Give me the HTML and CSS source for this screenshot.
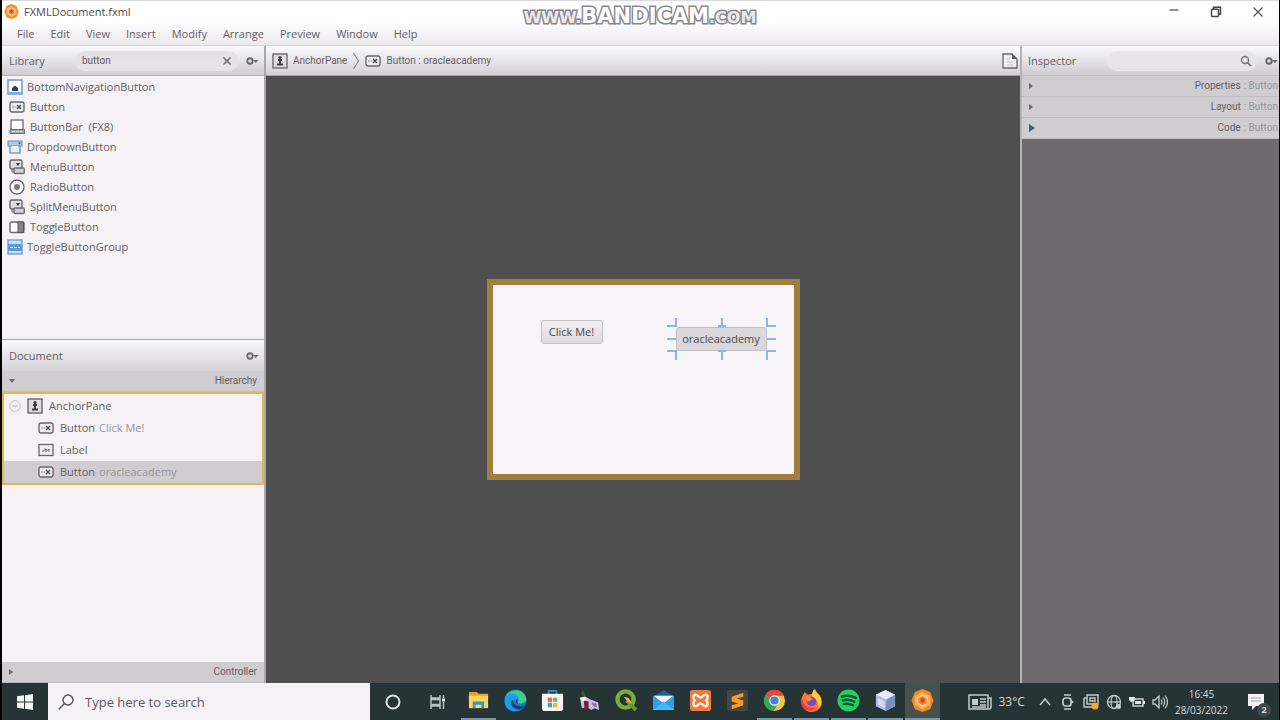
FILE: index.html
```html
<!DOCTYPE html>
<html lang="en">
<head>
<meta charset="utf-8">
<title>FXMLDocument.fxml</title>
<link rel="stylesheet" href="styles.css">
</head>
<body>
<svg class="defs" aria-hidden="true">
  <symbol id="i-button" viewBox="0 0 16 16"><rect x="1" y="3" width="14" height="10" rx="2" fill="#eee" stroke="#6b686c" stroke-width="1.4"/><path d="M4 6.500v3M5.500 8h2" stroke="#99969a" stroke-width="1"/><path d="M8 6l4 4M12 6l-4 4" stroke="#4c4a4e" stroke-width="1.400"/></symbol>
  <symbol id="i-anchor" viewBox="0 0 16 16"><rect x="1" y="1" width="14" height="14" fill="#dedcdf" stroke="#6b686c" stroke-width="1.4"/><path d="M8 4v8M6 7h4M5 11.500h6" stroke="#3d3b3f" stroke-width="1.800" fill="none"/><circle cx="8" cy="4.500" r="1.600" fill="#3d3b3f"/></symbol>
  <symbol id="i-label" viewBox="0 0 16 16"><rect x="1" y="2.500" width="14" height="11" fill="#eee" stroke="#6b686c" stroke-width="1.300"/><path d="M4 9h2V7.500M7 6v3h2V7.500H7M12 7.500h-2V9h2" stroke="#77747a" stroke-width=".9" fill="none"/></symbol>
  <symbol id="i-menu" viewBox="0 0 16 16"><rect x="1" y="1" width="12" height="9" rx="1.500" fill="#dedcdf" stroke="#6b686c" stroke-width="1.400"/><path d="M7 4h4L9 7z" fill="#333"/><rect x="5" y="9" width="10.300" height="5.500" rx="1" fill="#d0ced1" stroke="#6b686c" stroke-width="1.300"/><path d="M3 10v3h2" stroke="#6b686c" fill="none"/></symbol>
  <symbol id="i-gear" viewBox="0 0 14 10"><circle cx="5" cy="5" r="2.700" fill="none" stroke="#6b686c" stroke-width="1.900"/><path d="M8 4h5.500L10.800 7z" fill="#6b686c"/></symbol>
  <symbol id="i-scene" viewBox="0 0 24 24"><path d="M12 0l4 1.500 4 1.500 1.500 4L23.500 12l-2 5-1.500 4-4 1.500L12 24l-4-1.500L4 21l-1.500-4L.5 12l2-5L4 3l4-1.500z" fill="#f28a22"/><path d="M12 3l8 4.500v9L12 21l-8-4.500v-9z" fill="#ffb057"/><path d="M12 6.500l5 2.800v5.500l-5 2.900-5-2.900V9.300z" fill="#fb7d2c" stroke="#ffe1a6" stroke-width="1.200"/><circle cx="12" cy="12" r="2.300" fill="#e5401c"/></symbol>
</svg>

<header class="titlebar">
  <svg class="app-icon"><use href="#i-scene"/></svg>
  <h1>FXMLDocument.fxml</h1>
  <div class="window-controls">
    <button aria-label="Minimize"><svg viewBox="0 0 12 12"><path d="M1.500 4h9" stroke="#555" stroke-width="1.300"/></svg></button>
    <button aria-label="Restore"><svg viewBox="0 0 12 12"><path d="M3.500 3V1.200h7v7H9" fill="none" stroke="#444" stroke-width="1.500"/><rect x="1.500" y="3.300" width="7" height="7.200" rx="1" fill="#fff" stroke="#444" stroke-width="1.500"/></svg></button>
    <button aria-label="Close"><svg viewBox="0 0 12 12"><path d="M1.500 1.500l9 9M10.500 1.500l-9 9" stroke="#555" stroke-width="1.300"/></svg></button>
  </div>
</header>
<div class="watermark"><small>WWW.</small>BANDICAM<small>.COM</small></div>

<nav class="menubar">
  <button>File</button><button>Edit</button><button>View</button><button>Insert</button><button>Modify</button><button>Arrange</button><button>Preview</button><button>Window</button><button>Help</button>
</nav>

<main class="workspace">
  <aside class="left">
    <section class="library">
      <div class="panel-head">
        <label for="lib-search">Library</label>
        <div class="search">
          <input id="lib-search" type="text" value="button">
          <button aria-label="Clear search"><svg class="x-icon" viewBox="0 0 10 10"><path d="M1.500 1.500l7 7M8.500 1.500l-7 7" stroke="#6b686c" stroke-width="1.500"/></svg></button>
        </div>
        <button class="gear" aria-label="Library options"><svg><use href="#i-gear"/></svg></button>
      </div>
      <ul class="lib-list">
        <li class="wide"><svg viewBox="0 0 16 16"><rect x="1" y="1" width="14" height="14" fill="#fff" stroke="#6a9bc9" stroke-width="1.500"/><path d="M1 13h14v2H1z" fill="#7fb0dc"/><path d="M5 12V9l3-2.500L11 9v3z" fill="#174a73"/></svg>BottomNavigationButton</li>
        <li><svg><use href="#i-button"/></svg>Button</li>
        <li><svg viewBox="0 0 16 16"><rect x="2" y="1" width="12" height="11" fill="#fff" stroke="#6b686c" stroke-width="1.300"/><path d="M1 10.500h14.500v4H1z" fill="#aaa8ab" stroke="#6b686c"/><path d="M3 12.500h10" stroke="#ddd" stroke-dasharray="3 1"/></svg>ButtonBar&nbsp; (FX8)</li>
        <li class="wide"><svg viewBox="0 0 16 16"><rect x="3" y="6" width="10" height="8" fill="#e1effa" stroke="#689dcd" stroke-width="1.400"/><rect x="1" y="2" width="14" height="5" fill="#a9cdea" stroke="#5f91bf"/><path d="M5 7v2h6V7" fill="#fff"/><path d="M11 3.500h3l-1.500 2z" fill="#26537c"/></svg>DropdownButton</li>
        <li><svg><use href="#i-menu"/></svg>MenuButton</li>
        <li><svg viewBox="0 0 16 16"><circle cx="8" cy="8" r="7" fill="#f8f6f9" stroke="#6b686c" stroke-width="1.400"/><circle cx="8" cy="8" r="3" fill="#7b787c"/></svg>RadioButton</li>
        <li><svg><use href="#i-menu"/></svg>SplitMenuButton</li>
        <li><svg viewBox="0 0 16 16"><rect x="1" y="3" width="14" height="10.500" rx="1.500" fill="#fff" stroke="#6b686c" stroke-width="1.400"/><path d="M9 3h5.500v10.500H9z" fill="#89868a" stroke="#555" stroke-width="1"/></svg>ToggleButton</li>
        <li class="wide"><svg viewBox="0 0 16 16"><rect x="1" y="1" width="14" height="14" fill="#c6def2" stroke="#6a9bc9" stroke-width="1.300"/><rect x="1" y="5" width="14" height="7" fill="#5c9bd5"/><path d="M3 8.500h3m1 0h3m1 0h2" stroke="#d8eafa" stroke-width="1.200"/></svg>ToggleButtonGroup</li>
      </ul>
    </section>
    <section class="document">
      <div class="panel-head doc-head">
        <h2>Document</h2>
        <button class="gear" aria-label="Document options"><svg><use href="#i-gear"/></svg></button>
      </div>
      <button class="section-bar"><span class="arrow down"></span>Hierarchy</button>
      <ul class="tree">
        <li class="root"><svg class="fold" viewBox="0 0 12 12"><circle cx="6" cy="6" r="5.300" fill="#f4f2f5" stroke="#c4c2c5"/><path d="M3.500 6h5" stroke="#aaa8ab"/></svg><svg class="node"><use href="#i-anchor"/></svg>AnchorPane</li>
        <li><svg class="node"><use href="#i-button"/></svg>Button<span>Click Me!</span></li>
        <li><svg class="node"><use href="#i-label"/></svg>Label</li>
        <li class="selected"><svg class="node"><use href="#i-button"/></svg>Button<span>oracleacademy</span></li>
      </ul>
    </section>
    <button class="section-bar"><span class="arrow"></span>Controller</button>
  </aside>

  <section class="center">
    <div class="crumbs">
      <svg class="node"><use href="#i-anchor"/></svg><span>AnchorPane</span>
      <svg class="sep" viewBox="0 0 8 18"><path d="M1.500 1l5 8-5 8" fill="none" stroke="#8b888c" stroke-width="1.200"/></svg>
      <svg class="node"><use href="#i-button"/></svg><span>Button : oracleacademy</span>
      <svg class="page" viewBox="0 0 16 16"><path d="M1 1h9l5 5v9H1z" fill="#eeedef" stroke="#6b686c" stroke-width="1.300"/><path d="M10 1v5h5z" fill="#5c595d"/><path d="M5 6h3M5 9h6M5 12h6" stroke="#c7c5c8"/></svg>
    </div>
    <div class="canvas">
      <div class="scene">
        <button class="fx click">Click Me!</button>
        <button class="fx oracle">oracleacademy</button>
        <svg class="handles" viewBox="0 0 110 42"><path d="M0 8h9V0M51 8h8M55 0v8M109 8h-9V0M0 21h9M100 21h9M0 33h9v9M55 33v9M51 33h8M109 33h-9v9" fill="none" stroke="#8fb3ec" stroke-width="2"/></svg>
      </div>
    </div>
  </section>

  <aside class="right">
    <div class="panel-head">
      <label for="insp-search">Inspector</label>
      <div class="search">
        <input id="insp-search" type="text">
        <svg class="lens" viewBox="0 0 12 12"><circle cx="5" cy="5" r="3.500" fill="none" stroke="#777479" stroke-width="1.500"/><path d="M7.500 7.500l3.500 3.500" stroke="#777479" stroke-width="1.700"/></svg>
      </div>
      <button class="gear" aria-label="Inspector options"><svg><use href="#i-gear"/></svg></button>
    </div>
    <button class="section-bar"><span class="arrow"></span>Properties<i>: Button</i></button>
    <button class="section-bar"><span class="arrow"></span>Layout<i>: Button</i></button>
    <button class="section-bar"><span class="arrow focus"></span>Code<i>: Button</i></button>
  </aside>
</main>

<footer class="taskbar">
  <button class="start" aria-label="Start"><svg viewBox="0 0 16 16"><path d="M0 2.300l7-1v6.300H0zM8 1.200L16 0v7.600H8zM0 8.500h7v6.300l-7-1zM8 8.500h8V16l-8-1.200z" fill="#f3f6f6"/></svg></button>
  <label class="tb-search">
    <svg viewBox="0 0 16 16"><circle cx="10" cy="6" r="5" fill="none" stroke="#555" stroke-width="1.400"/><path d="M6.300 9.700L.8 15.200" stroke="#555" stroke-width="1.500"/></svg>
    <input type="text" placeholder="Type here to search" aria-label="Type here to search">
  </label>
  <div class="system">
    <button aria-label="Cortana"><svg viewBox="0 0 16 16"><circle cx="8" cy="8" r="6.500" fill="none" stroke="#dfe5e5" stroke-width="2"/></svg></button>
    <button aria-label="Task view"><svg viewBox="0 0 16 16"><path d="M1 1v3h9V1M1 15v-3h9v3M1 5.500h9v5H1zM13.500 1v3M13.500 8v7" fill="none" stroke="#b9c3c3" stroke-width="1.500"/><path d="M12 4.500h3v3h-3z" fill="#dfe5e5"/></svg></button>
  </div>
  <div class="apps">
    <button class="running" aria-label="File Explorer"><svg viewBox="0 0 24 24"><path d="M2 3h8l2 2h10v5H2z" fill="#e3a62d"/><path d="M2 7h20v13H2z" fill="#ffd45c"/><path d="M6 20v-7h12v7h-3v-3.500H9V20z" fill="#3994cf"/></svg></button>
    <button aria-label="Edge"><svg viewBox="0 0 24 24"><circle cx="12" cy="12" r="11.500" fill="#1477ca"/><path d="M1 10C3-1 20-2 23 9c1 5-3 8-7 7-2 0-3-1-1-3 1-3-2-6-6-6-4 0-7 1-8 3z" fill="#44ca8d"/><path d="M1 10C3 4 11 3 15 8c2 3-1 4-1 6-1-4-6-3-7 0-1 5 4 8 9 8C7 26-1 19 1 10z" fill="#1d9fe5"/><path d="M9 11c-4 5 1 11 8 10 3-1 4-2 5-4-5 2-13 1-13-6z" fill="#103f86"/><path d="M14 10c1 1-1 3 0 4 1 2 6 2 8-1-1 2-3 3-5 3-4 0-6-3-3-6z" fill="#24313a"/></svg></button>
    <button aria-label="Microsoft Store"><svg viewBox="0 0 24 24"><path d="M8 6V2h8v4" fill="none" stroke="#2d8cc7" stroke-width="2"/><path d="M1 5h22v15q0 3-3 3H4q-3 0-3-3z" fill="#f5f5f6"/><path d="M7 9h4.500v4.500H7z" fill="#ee6644"/><path d="M12.500 9H17v4.500h-4.500z" fill="#80b94b"/><path d="M7 14.500h4.500V19H7z" fill="#35a1dd"/><path d="M12.500 14.500H17V19h-4.500z" fill="#f1b92e"/></svg></button>
    <button aria-label="Image tool"><svg viewBox="0 0 24 24"><path d="M5 1l3 5-1 4-4-5z" fill="#28622f"/><path d="M2 9l6-1 5 3 8 3 1 8-5-2-3 2-5-3-5 1z" fill="#c9c1dc"/><path d="M6 12l5 1v8H7z" fill="#741d37"/><path d="M2 9l5-1 2 3-4 2z" fill="#f5f3f5"/><path d="M14 14l5 1 1 4-4-1z" fill="#8475af"/></svg></button>
    <button aria-label="QGIS"><svg viewBox="0 0 24 24"><circle cx="11" cy="11" r="8.500" fill="none" stroke="#79af37" stroke-width="4.500"/><path d="M12 12l10 10" stroke="#65982d" stroke-width="4"/><path d="M9 8l5 1 4 6-4-1z" fill="#edb248"/></svg></button>
    <button aria-label="Mail"><svg viewBox="0 0 24 24"><path d="M1 8l11-7 11 7v4H1z" fill="#155fa9"/><path d="M1 7h22v15H1z" fill="#2e9fe5"/><path d="M2 7h20l-10 8z" fill="#f4f5fc"/><path d="M1 22l11-9 11 9z" fill="#47b8f2"/></svg></button>
    <button aria-label="XAMPP"><svg viewBox="0 0 24 24"><rect x="1" y="1" width="22" height="22" rx="3" fill="#ed7844"/><path d="M7 6c-3 0-3 4-1 6-2 2-2 6 1 6 2 0 3-3 5-3s3 3 5 3c3 0 3-4 1-6 2-2 2-6-1-6-2 0-3 3-5 3S9 6 7 6z" fill="none" stroke="#fff0e7" stroke-width="2.500"/></svg></button>
    <button aria-label="Sublime Text"><svg viewBox="0 0 24 24"><rect x="1" y="1" width="22" height="22" rx="2" fill="#444545"/><path d="M6 8l12-4v4l-7 2 7 2v5L6 21v-4l7-2-7-2z" fill="#ff9a1f"/></svg></button>
    <button class="running" aria-label="Chrome"><svg viewBox="0 0 24 24"><circle cx="12" cy="12" r="11" fill="#f4c63e"/><path d="M12 12L2.500 6.500A11 11 0 0 1 22 7H12z" fill="#df4b3b"/><path d="M2.500 6.500A11 11 0 0 0 11 23l5-8-4-3z" fill="#37a45d"/><circle cx="12" cy="12" r="5.500" fill="#f7f4ed"/><circle cx="12" cy="12" r="4.300" fill="#4384df"/></svg></button>
    <button class="running" aria-label="Firefox"><svg viewBox="0 0 24 24"><path d="M5 3l3 3 5-1c0-2 1-4 3-5 1 4 5 5 6 10 3 8-3 14-10 14S-1 17 2 9c0-2 2-3 3-6z" fill="#ff7139"/><path d="M15 0c1 4 5 5 7 10 1 4 0 8-3 10 1-5-1-9-6-11-1-3 0-7 2-9z" fill="#ffd137"/><path d="M2 10c2 9 8 11 14 9-2 4-9 5-13 0-2-3-2-6-1-9z" fill="#ef344f"/><circle cx="12" cy="13" r="5" fill="#754bc5"/><path d="M5 8l5 0 3 3-5 2z" fill="#ff9b38"/></svg></button>
    <button class="running" aria-label="Spotify"><svg viewBox="0 0 24 24"><circle cx="12" cy="12" r="11.500" fill="#23cf62"/><path d="M5 8c5-1.500 10-1 14.500 1.300M6 12c4-1.300 8-.8 12 1.300M7 15.800c3-1 6.500-.5 9.500 1.200" fill="none" stroke="#12552d" stroke-width="2.500" stroke-linecap="round"/></svg></button>
    <button class="running" aria-label="NetBeans"><svg viewBox="0 0 24 24"><path d="M12 1l10 5v12l-10 5-10-5V6z" fill="#adbbdf"/><path d="M12 1l10 5-9 5L2 6z" fill="#e6ebfa"/><path d="M13 11l9-5v12l-10 5z" fill="#7d8fbe"/><path d="M4 9l7 4v7l-7-4z" fill="#d2daf0"/></svg></button>
    <button class="running active" aria-label="Scene Builder"><svg><use href="#i-scene"/></svg></button>
  </div>
  <div class="tray">
    <svg class="news" viewBox="0 0 24 16"><rect x="1" y="1" width="19" height="14" fill="none" stroke="#c3cccc" stroke-width="1.500"/><path d="M20 4h3v9q0 2-2 2" fill="none" stroke="#c3cccc" stroke-width="1.500"/><rect x="4" y="5" width="6" height="6" fill="#c3cccc"/><path d="M12 5h6M12 8h6M12 11h6M4 13h14" stroke="#c3cccc" stroke-width="1.300"/></svg>
    <span class="temp">33°C</span>
    <svg viewBox="0 0 16 16"><path d="M3 11l5-6 5 6" fill="none" stroke="#c3cccc" stroke-width="1.500"/></svg>
    <svg viewBox="0 0 16 16"><path d="M4 1h7M4 15h7" stroke="#c3cccc" stroke-width="1.500"/><rect x="3" y="4" width="8" height="8" rx="2.500" fill="none" stroke="#c3cccc" stroke-width="1.700"/><path d="M11 6l3 2-3 2z" fill="#c3cccc"/></svg>
    <svg viewBox="0 0 16 16"><path d="M1 4h3M1 4v9h9M4 1h11v9H4zM7 4h5v3H7z" fill="none" stroke="#c3cccc" stroke-width="1.400"/><circle cx="12" cy="12" r="3.600" fill="#f3a72b"/></svg>
    <svg viewBox="0 0 16 16"><circle cx="8" cy="8" r="6.500" fill="none" stroke="#c3cccc" stroke-width="1.300"/><ellipse cx="8" cy="8" rx="3" ry="6.500" fill="none" stroke="#c3cccc" stroke-width="1.200"/><path d="M1.500 8h13" stroke="#c3cccc" stroke-width="1.300"/><circle cx="12.500" cy="12.500" r="2.500" fill="#c3cccc"/></svg>
    <svg viewBox="0 0 16 16"><rect x="4" y="5" width="10" height="7" fill="none" stroke="#dfe5e5" stroke-width="1.300"/><path d="M6 7h6v3H6zM14 7h2v3h-2zM0 3h6v3q-3 4-6 0z" fill="#dfe5e5"/></svg>
    <svg viewBox="0 0 16 16"><path d="M1 6h2l4-4v12L3 10H1z" fill="none" stroke="#c3cccc" stroke-width="1.300"/><path d="M9 5.500q2 2.500 0 5M11 3.500q3.500 4.500 0 9M13 1.500q5 6.500 0 13" fill="none" stroke="#c3cccc" stroke-width="1.200"/></svg>
    <time><span>16:45</span><span>28/03/2022</span></time>
    <button class="notify" aria-label="Notifications, 2 new"><svg viewBox="0 0 18 18"><path d="M1 1h16v12H9l-4 4v-4H1z" fill="#f3f5f5"/><path d="M4 5h10M4 8h10" stroke="#9ba4a4"/></svg><b>2</b></button>
  </div>
</footer>
</body>
</html>
```

FILE: styles.css
```css
* { box-sizing: border-box; }
body {
  margin: 0;
  min-height: 100vh;
  display: flex;
  flex-direction: column;
  padding: 0 1px 0 2px;
  background: #000;
  color: #626064;
  font-family: "Open Sans", "Noto Sans", sans-serif;
  font-size: 11px;
  line-height: 16px;
  position: relative;
  overflow-x: hidden;
}
button, input {
  font: inherit;
  color: inherit;
  background: none;
  border: 0;
  padding: 0;
  margin: 0;
  outline: 0;
}
h1, h2, ul { margin: 0; padding: 0; font: inherit; list-style: none; }
svg { display: block; flex: none; }
.defs { position: absolute; width: 0; height: 0; }

.titlebar {
  display: flex;
  align-items: center;
  gap: 5px;
  height: 22px;
  padding-left: 2px;
  background: #fff;
  border-top: 1px solid #dcdadd;
  color: #4c4a4e;
}
.app-icon { width: 15px; height: 15px; }
.window-controls { display: flex; margin-left: auto; }
.window-controls button { width: 42px; height: 20px; display: grid; place-items: center; }
.window-controls svg { width: 12px; height: 12px; }
.watermark {
  position: absolute;
  top: 4px;
  left: 0;
  right: 0;
  text-align: center;
  font: bold 21px/24px "DejaVu Sans", sans-serif;
  color: #fff;
  -webkit-text-stroke: 3px #89878b;
  paint-order: stroke fill;
  pointer-events: none;
}
.watermark small { font-size: 16px; color: #eceaed; }

.menubar {
  display: flex;
  gap: 16px;
  height: 24px;
  padding: 0 15px;
  background: linear-gradient(#fefdff, #ebe9ec);
  border-bottom: 1px solid #d6d4d7;
}

.workspace {
  flex: 1;
  display: grid;
  grid-template-columns: 264px minmax(0, 1fr) 259px;
}
.left, .library, .document, .center, .right { display: flex; flex-direction: column; }
.left { background: #f4f2f5; border-right: 2px solid #aaa8ab; }
.library { height: 294px; border-bottom: 1px solid #a9a7aa; }
.document { flex: 1; }
.panel-head {
  display: flex;
  align-items: center;
  height: 30px;
  padding: 0 5px 0 7px;
  background: linear-gradient(#faf9fb, #cfcdd0);
  border-bottom: 1px solid #b9b7ba;
}
.gear { margin-left: auto; }
.gear svg { width: 14px; height: 10px; }
.search {
  display: flex;
  align-items: center;
  min-width: 0;
  height: 20px;
  border-radius: 10px;
  background: linear-gradient(#e3e1e4, #e6e4e7);
}
.library .search { width: 164px; margin-left: 30px; padding: 0 7px; }
.search input { flex: 1; min-width: 0; }
.search input, .section-bar, .crumbs { font-family: Roboto, "Open Sans", sans-serif; font-size: 10px; }
.x-icon { width: 10px; height: 10px; }
.lib-list { padding: 1px 5px; }
.lib-list li { display: flex; align-items: center; gap: 5px; height: 20px; padding-left: 2px; }
.lib-list .wide { padding-left: 0; gap: 4px; }
.lib-list svg, .node { width: 16px; height: 16px; }
.doc-head { height: 31px; border: 0; background: linear-gradient(#f9f8fa, #d4d2d5); }
.section-bar {
  display: flex;
  align-items: center;
  justify-content: flex-end;
  flex: none;
  height: 21px;
  padding: 0 7px;
  background: #cfcdd0;
  border-bottom: 1px solid #bfbdc0;
  white-space: nowrap;
}
.arrow {
  margin-right: auto;
  border: 3px solid transparent;
  border-left: 4px solid #6b686c;
  border-right: 0;
}
.arrow.down { border: 3px solid transparent; border-top: 4px solid #6b686c; border-bottom: 0; }
.arrow.focus { border-left-color: #38616b; border-width: 4px 0 4px 6px; }
.tree { border: 2px solid #e5b457; padding-top: 1px; }
.tree li { display: flex; align-items: center; height: 22px; padding-left: 34px; }
.tree .root { padding-left: 5px; }
.tree .fold { width: 12px; height: 12px; margin-right: 6px; }
.tree .node { margin-right: 6px; }
.tree span { margin-left: 4px; color: #98969a; }
.tree .selected { background: #cfcdd0; }

.crumbs {
  display: flex;
  align-items: center;
  gap: 5px;
  height: 30px;
  padding: 0 2px 0 6px;
  background: linear-gradient(#fbfafc, #d3d1d4);
  border-bottom: 1px solid #a3a1a4;
}
.sep { width: 8px; height: 18px; }
.page { width: 16px; height: 16px; margin-left: auto; }
.canvas { flex: 1; display: grid; place-items: center; background: #4f4f4f; }
.scene {
  position: relative;
  width: 313px;
  height: 201px;
  background: #f7f5f8;
  border: 6px solid #a17f40;
}
.fx {
  position: absolute;
  height: 24px;
  border: 1px solid #c2c0c3;
  border-radius: 3px;
  background: linear-gradient(#f1eff2, #dddbde);
  color: #4a484c;
}
.click { left: 48px; top: 35px; width: 62px; }
.oracle { left: 183px; top: 42px; width: 91px; background: #dad8db; }
.handles { position: absolute; left: 174px; top: 33px; width: 110px; height: 42px; }

.right { background: #6d6b6d; border-left: 2px solid #b5b3b6; }
.right .panel-head { padding: 0 1px 0 6px; border-bottom-color: #c0bec1; }
.right .search { flex: 1; margin: 0 7px 0 31px; padding: 0 5px; background: linear-gradient(#e9e7ea, #e6e4e7); }
.lens { width: 12px; height: 12px; }
.right .section-bar { padding-right: 1px; }
.right .section-bar i { font-style: normal; color: #98969a; margin-left: 3px; }

.taskbar { display: flex; height: 37px; background: #263435; color: #d5dcdc; }
.taskbar button { display: grid; place-items: center; }
.start { width: 46px; }
.start svg, .tb-search svg, .system svg { width: 16px; height: 16px; }
.tb-search {
  display: flex;
  align-items: center;
  gap: 11px;
  width: 322px;
  padding-left: 10px;
  background: #f4f2f5;
  color: #5c5a5e;
  font-size: 13px;
}
.tb-search input { flex: 1; min-width: 0; }
.tb-search input::placeholder { color: inherit; opacity: 1; }
.system, .apps { display: flex; }
.system button { width: 45px; }
.apps { margin-left: 1px; gap: 2px; }
.apps button { width: 35px; border-bottom: 2px solid transparent; }
.apps svg { width: 23px; height: 23px; }
.apps .running { border-bottom-color: #7797ad; }
.apps .active { background: #46504f; }
.tray { display: flex; align-items: center; gap: 7px; margin-left: auto; padding-right: 8px; }
.tray svg { width: 16px; height: 16px; }
.tray .news { width: 24px; }
.temp { font-size: 12px; margin-right: 5px; }
time { display: flex; flex-direction: column; align-items: center; font-size: 10px; margin: 0 6px 0 0; }
.notify { position: relative; width: 30px; height: 30px; }
.notify svg { width: 18px; height: 18px; }
.notify b {
  position: absolute;
  right: 0;
  bottom: 0;
  width: 14px;
  height: 14px;
  border-radius: 50%;
  background: #3c4849;
  font-size: 9px;
  line-height: 14px;
}
```
